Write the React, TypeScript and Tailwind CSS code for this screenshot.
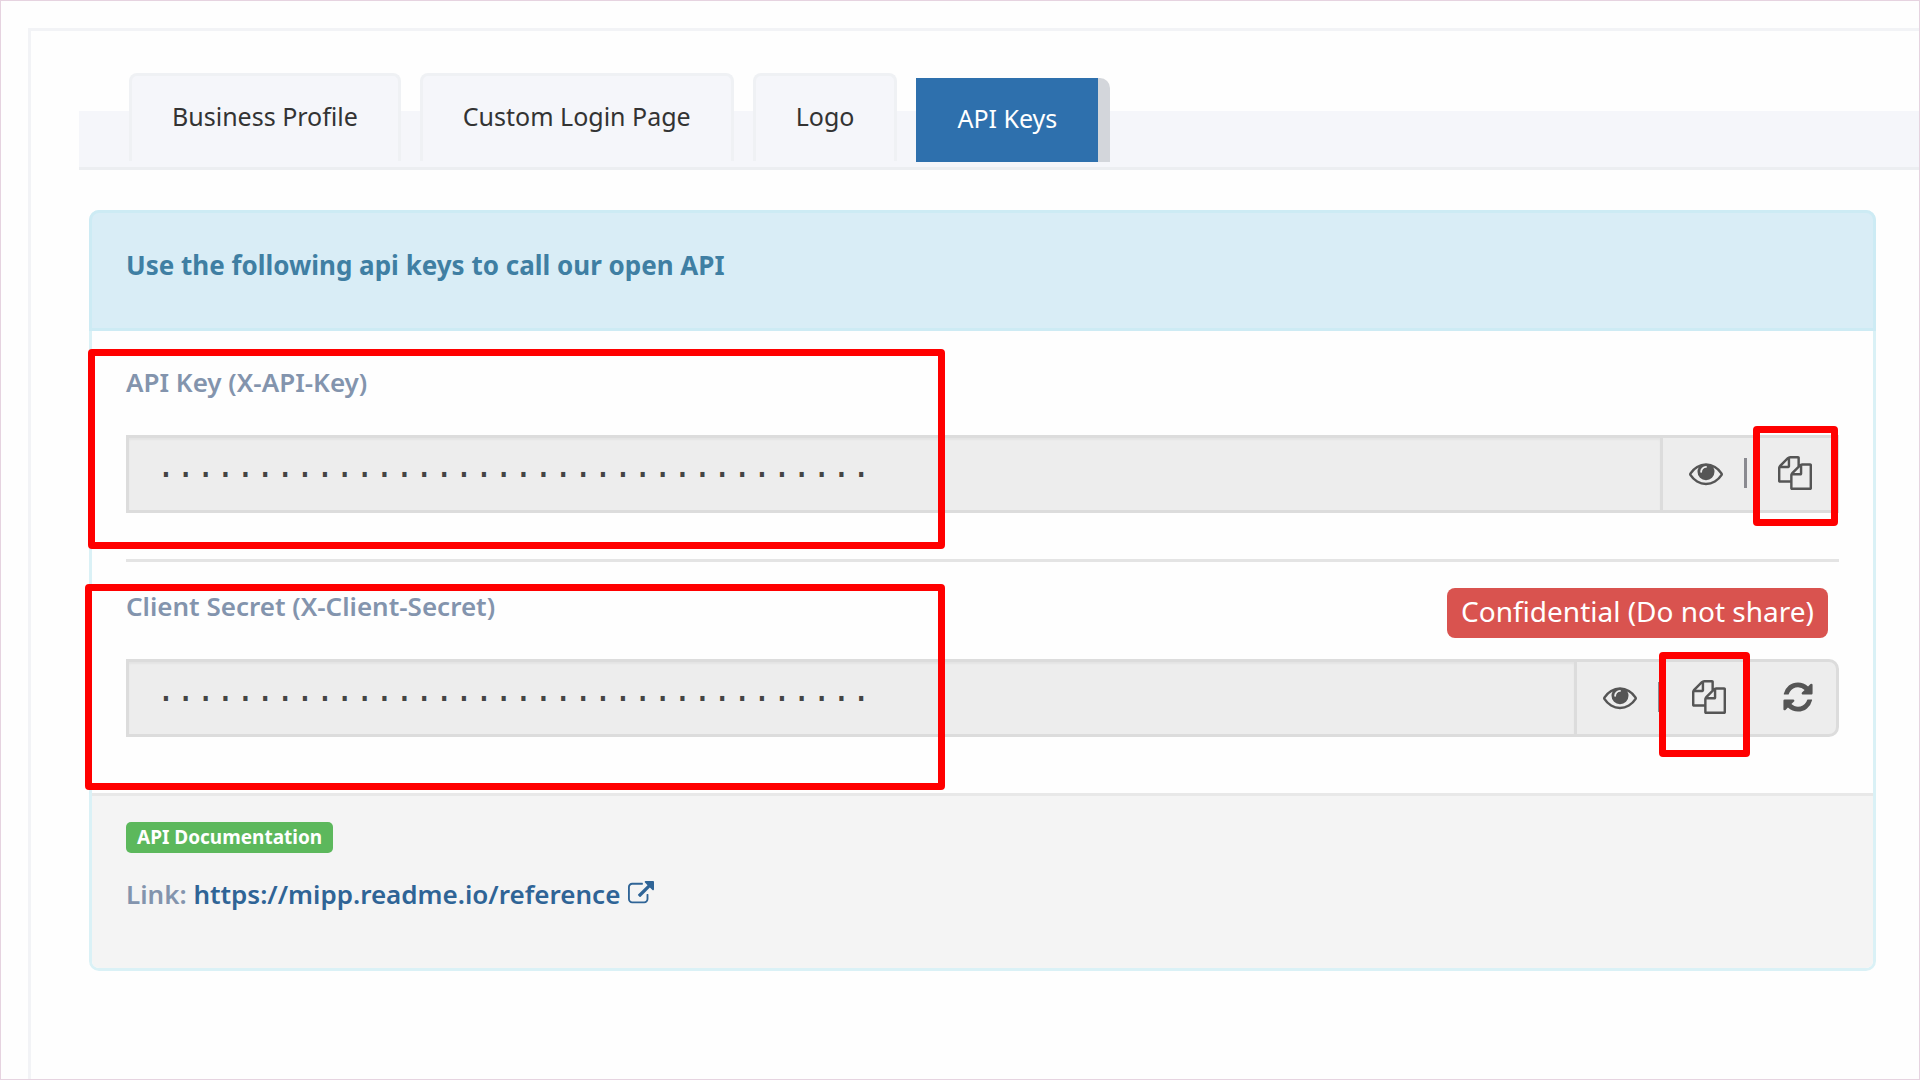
import type { ReactNode } from 'react';

const tabs = ['Business Profile', 'Custom Login Page', 'Logo'];
const mask = '·'.repeat(36);

const icons = {
  eye: 'M1664 960q-152-236-381-353 61 104 61 225 0 185-131.5 316.5t-316.5 131.5-316.5-131.5-131.5-316.5q0-121 61-225-229 117-381 353 133 205 333.5 326.5t434.5 121.5 434.5-121.5 333.5-326.5zm-720-384q0-20-14-34t-34-14q-125 0-214.5 89.5t-89.5 214.5q0 20 14 34t34 14 34-14 14-34q0-86 61-147t147-61q20 0 34-14t14-34zm848 384q0 34-20 69-140 230-376.5 368.5t-499.5 138.5-499.5-139-376.5-368q-20-35-20-69t20-69q140-229 376.5-368t499.5-139 499.5 139 376.5 368q20 35 20 69z',
  copy: 'M1696 384q40 0 68 28t28 68v1216q0 40-28 68t-68 28h-960q-40 0-68-28t-28-68v-288h-544q-40 0-68-28t-28-68v-672q0-40 20-88t48-76l408-408q28-28 76-48t88-20h416q40 0 68 28t28 68v328q68-40 128-40h416zm-544 213l-299 299h299v-299zm-640-384l-299 299h299v-299zm196 647l316-316v-416h-384v416q0 40-28 68t-68 28h-416v640h512v-256q0-40 20-88t48-76zm956 804v-1152h-384v416q0 40-28 68t-68 28h-416v640h896z',
  refresh:
    'M1639 1056q0 5-1 7-64 268-268 434.5t-478 166.5q-146 0-282.5-55t-243.5-157l-129 129q-19 19-45 19t-45-19-19-45v-448q0-26 19-45t45-19h448q26 0 45 19t19 45-19 45l-137 137q71 66 161 102t187 36q134 0 250-65t186-179q11-17 53-117 8-23 30-23h192q13 0 22.5 9.5t9.5 22.5zm25-800v448q0 26-19 45t-45 19h-448q-26 0-45-19t-19-45 19-45l138-138q-148-137-349-137-134 0-250 65t-186 179q-11 17-53 117-8 23-30 23h-199q-13 0-22.5-9.5t-9.5-22.5v-7q65-268 270-434.5t480-166.5q146 0 284 55.5t245 156.5l130-129q19-19 45-19t45 19 19 45z',
  external:
    'M1408 928v320q0 119-84.5 203.5t-203.5 84.5h-832q-119 0-203.5-84.5t-84.5-203.5v-832q0-119 84.5-203.5t203.5-84.5h704q14 0 23 9t9 23v64q0 14-9 23t-23 9h-704q-66 0-113 47t-47 113v832q0 66 47 113t113 47h832q66 0 113-47t47-113v-320q0-14 9-23t23-9h64q14 0 23 9t9 23zm384-864v512q0 26-19 45t-45 19-45-19l-176-176-652 652q-10 10-23 10t-23-10l-114-114q-10-10-10-23t10-23l652-652-176-176q-19-19-19-45t19-45 45-19h512q26 0 45 19t19 45z',
};

function Icon({ name, className }: { name: keyof typeof icons; className: string }) {
  return (
    <svg viewBox="0 0 1792 1792" fill="currentColor" className={className} aria-hidden="true">
      <path d={icons[name]} />
    </svg>
  );
}

// Red callout drawn over the part of the page it points at
function Callout({ className }: { className: string }) {
  return (
    <div className={`pointer-events-none absolute z-10 rounded-[4px] border-[7px] border-[#ff0000] ${className}`} />
  );
}

function IconButton({ name, label, children }: { name: keyof typeof icons; label: string; children?: ReactNode }) {
  return (
    <button type="button" aria-label={label} className="relative cursor-pointer">
      <Icon name={name} className="size-[34px]" />
      {children}
    </button>
  );
}

function Separator() {
  return <span className="mr-[31px] ml-[21px] h-[30px] w-[3px] bg-[#8a8a90]" />;
}

function KeyInput({ id, rounded, children }: { id: string; rounded?: boolean; children: ReactNode }) {
  return (
    <div className="flex h-[78px]">
      <input
        id={id}
        type="text"
        readOnly
        value={mask}
        className="min-w-0 flex-1 border-[3px] border-r-0 border-[#dcdcdc] bg-[#ededed] px-[27px] pt-[2px] font-['DejaVu_Sans_Mono',monospace] text-[33px] text-[#444444] shadow-[inset_0_2px_2px_rgba(0,0,0,0.04)] outline-none"
      />
      <div
        className={`flex items-center border-[3px] border-[#dcdcdc] bg-[#ededed] pb-[2px] pl-[26px] text-[#555555] ${
          rounded ? 'rounded-r-[10px] pr-[21px]' : 'pr-[24px]'
        }`}
      >
        {children}
      </div>
    </div>
  );
}

export default function App() {
  return (
    <div className="flex min-h-screen flex-col overflow-x-hidden border border-[#e6d3e0] bg-[#fefefe] font-['Noto_Sans',sans-serif] text-[26px] leading-[36px]">
      <main className="mt-[27px] ml-[27px] flex-1 border-t-[3px] border-l-[3px] border-[#f2f3f6]">
        {/* Tabs */}
        <nav className="mt-[80px] ml-[48px] flex gap-[19px] border-b-[3px] border-[#eceef1] bg-[#f5f6fa] pb-[6px] pl-[50px] text-[25px]">
          {tabs.map((tab) => (
            <a
              key={tab}
              href="#"
              className="-mt-[38px] rounded-t-[8px] border-[3px] border-b-0 border-[#eff1f4] bg-[#f5f6fa] px-[40px] pt-[22px] pb-[27px] text-[#333333]"
            >
              {tab}
            </a>
          ))}
          <a
            href="#"
            aria-current="page"
            className="-mt-[33px] -mb-[1px] rounded-tr-[10px] bg-[#d3d6db] pr-[12px] text-white"
          >
            <span className="block h-full bg-[#2e70ad] px-[41px] pt-[22px]">API Keys</span>
          </a>
        </nav>

        {/* API keys panel */}
        <section className="mt-[40px] mr-[43px] ml-[58px] rounded-[10px] border-[3px] border-[#daf1f6]">
          <header className="-mx-[3px] -mt-[3px] rounded-t-[10px] border-[3px] border-[#cdebf4] bg-[#d9edf6] px-[34px] pt-[34px] pb-[45px] font-bold text-[#3f7fa3]">
            Use the following api keys to call our open API
          </header>

          <div className="px-[34px] pt-[33px] pb-[56px]">
            <div className="relative">
              <label htmlFor="api-key" className="mb-[35px] block font-semibold text-[#8394ad]">
                API Key (X-API-Key)
              </label>
              <KeyInput id="api-key">
                <IconButton name="eye" label="Show API key" />
                <Separator />
                <IconButton name="copy" label="Copy API key">
                  <Callout className="-top-[30px] -left-[25px] h-[100px] w-[85px]" />
                </IconButton>
              </KeyInput>
              <Callout className="-top-[15px] -left-[38px] h-[200px] w-[857px]" />
            </div>

            <hr className="mt-[46px] mb-[26px] border-t-[3px] border-[#e4e4e4]" />

            <div className="relative">
              <div className="mb-[21px] flex items-start justify-between">
                <label htmlFor="client-secret" className="font-semibold text-[#8394ad]">
                  Client Secret (X-Client-Secret)
                </label>
                <span className="mr-[11px] rounded-[8px] bg-[#d9534f] px-[14px] pt-[5px] pb-[9px] text-[28px] text-white">
                  Confidential (Do not share)
                </span>
              </div>
              <KeyInput id="client-secret" rounded>
                <IconButton name="eye" label="Show client secret" />
                <Separator />
                <IconButton name="copy" label="Copy client secret">
                  <Callout className="-top-[28px] -left-[33px] h-[105px] w-[91px]" />
                </IconButton>
                <Separator />
                <IconButton name="refresh" label="Regenerate client secret" />
              </KeyInput>
              <Callout className="-top-[4px] -left-[41px] h-[206px] w-[860px]" />
            </div>
          </div>

          <footer className="rounded-b-[7px] border-t-[3px] border-[#e8e8e8] bg-[#f4f4f4] px-[34px] pt-[26px] pb-[56px]">
            <span className="block w-fit rounded-[5px] bg-[#5cb85c] px-[11px] text-[19px] leading-[31px] font-bold text-white">
              API Documentation
            </span>
            <p className="mt-[23px] font-semibold text-[#8394ad]">
              Link:{' '}
              <a href="#" className="text-[#2f6496]">
                https://mipp.readme.io/reference
                <Icon name="external" className="ml-[8px] inline size-[26px] align-[-3px]" />
              </a>
            </p>
          </footer>
        </section>
      </main>
    </div>
  );
}
